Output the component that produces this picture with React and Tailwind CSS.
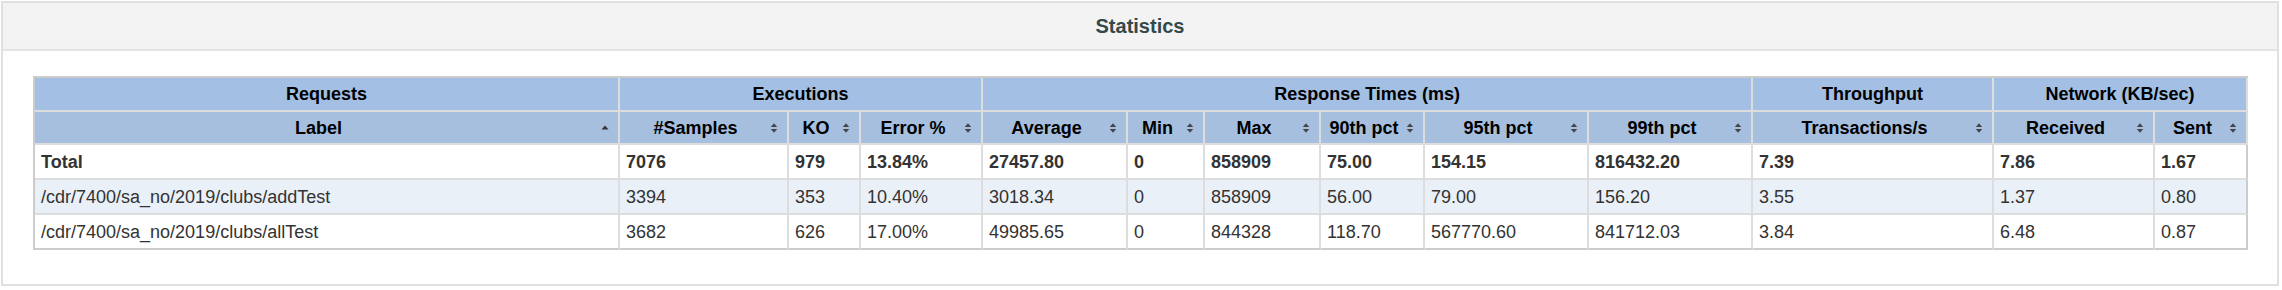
import React from "react";

const cols = [
  { label: "Label", w: 585, icon: "asc" },
  { label: "#Samples", w: 169 },
  { label: "KO", w: 72 },
  { label: "Error %", w: 122 },
  { label: "Average", w: 145 },
  { label: "Min", w: 77 },
  { label: "Max", w: 116 },
  { label: "90th pct", w: 104 },
  { label: "95th pct", w: 164 },
  { label: "99th pct", w: 164 },
  { label: "Transactions/s", w: 241 },
  { label: "Received", w: 161 },
  { label: "Sent", w: 93 },
];

const groups = [
  { label: "Requests", span: 1 },
  { label: "Executions", span: 3 },
  { label: "Response Times (ms)", span: 6 },
  { label: "Throughput", span: 1 },
  { label: "Network (KB/sec)", span: 2 },
];

const rows = [
  { bold: true, bg: "bg-white", cells: ["Total", "7076", "979", "13.84%", "27457.80", "0", "858909", "75.00", "154.15", "816432.20", "7.39", "7.86", "1.67"] },
  { bold: false, bg: "bg-[#eaf0f8]", cells: ["/cdr/7400/sa_no/2019/clubs/addTest", "3394", "353", "10.40%", "3018.34", "0", "858909", "56.00", "79.00", "156.20", "3.55", "1.37", "0.80"] },
  { bold: false, bg: "bg-white", cells: ["/cdr/7400/sa_no/2019/clubs/allTest", "3682", "626", "17.00%", "49985.65", "0", "844328", "118.70", "567770.60", "841712.03", "3.84", "6.48", "0.87"] },
];

function SortIcon({ asc }) {
  if (asc) {
    return (
      <svg width="8" height="10" viewBox="0 0 8 10" className="absolute right-[9px] top-1/2 -translate-y-1/2">
        <path d="M0.5 6.5 L4 2.5 L7.5 6.5 Z" fill="#333" />
      </svg>
    );
  }
  return (
    <svg width="8" height="12" viewBox="0 0 8 12" className="absolute right-[9px] top-1/2 -translate-y-1/2">
      <path d="M0.8 5 L4 1.2 L7.2 5 Z" fill="#444" />
      <path d="M0.8 7 L4 10.8 L7.2 7 Z" fill="#444" />
    </svg>
  );
}

export default function App() {
  return (
    <div className="w-[2282px] h-[290px] bg-white p-[1px]" style={{ fontFamily: '"Liberation Sans", Arial, Helvetica, sans-serif' }}>
      <div className="w-[2278px] border-2 border-[#e0e0e0] bg-white">
        <div className="h-[48px] bg-[#f3f3f3] border-b-2 border-[#e3e3e3] flex items-center justify-center">
          <span className="text-[20px] font-bold text-[#34494a] leading-none">Statistics</span>
        </div>
        <div className="pl-[30px] pr-[29px] pt-[25px] pb-[34px]">
          <table className="border-separate border-spacing-0 table-fixed border-l-2 border-t-2 border-[#cccccc] w-[2215px]">
            <colgroup>
              {cols.map((c, i) => (
                <col key={i} style={{ width: c.w }} />
              ))}
            </colgroup>
            <thead>
              <tr className="h-[34px] bg-[#a3bfe3]">
                {groups.map((g, i) => (
                  <th
                    key={i}
                    colSpan={g.span}
                    className="border-r-2 border-b-2 border-[#dddddd] text-center text-[18px] font-bold text-black leading-[20px] p-0"
                  >
                    {g.label}
                  </th>
                ))}
              </tr>
              <tr className="h-[33px] bg-[#a6bfdf]">
                {cols.map((c, i) => (
                  <th
                    key={i}
                    className="relative border-r-2 border-b-2 border-[#dddddd] text-center text-[18px] font-bold text-black leading-[20px] pl-[8px] pr-[24px] py-0 whitespace-nowrap"
                  >
                    {c.label}
                    <SortIcon asc={c.icon === "asc"} />
                  </th>
                ))}
              </tr>
            </thead>
            <tbody>
              {rows.map((r, ri) => (
                <tr key={ri} className={`h-[35px] ${r.bg}`}>
                  {r.cells.map((v, ci) => (
                    <td
                      key={ci}
                      className={`border-r-2 border-b-2 ${ri === rows.length - 1 ? "border-b-[#cccccc]" : "border-b-[#dddddd]"} ${ci === cols.length - 1 ? "border-r-[#cccccc]" : "border-r-[#dddddd]"} text-left pl-[6px] py-0 text-[18px] leading-[20px] text-[#333333] whitespace-nowrap ${r.bold ? "font-bold" : "font-normal"}`}
                    >
                      {v}
                    </td>
                  ))}
                </tr>
              ))}
            </tbody>
          </table>
        </div>
      </div>
    </div>
  );
}
